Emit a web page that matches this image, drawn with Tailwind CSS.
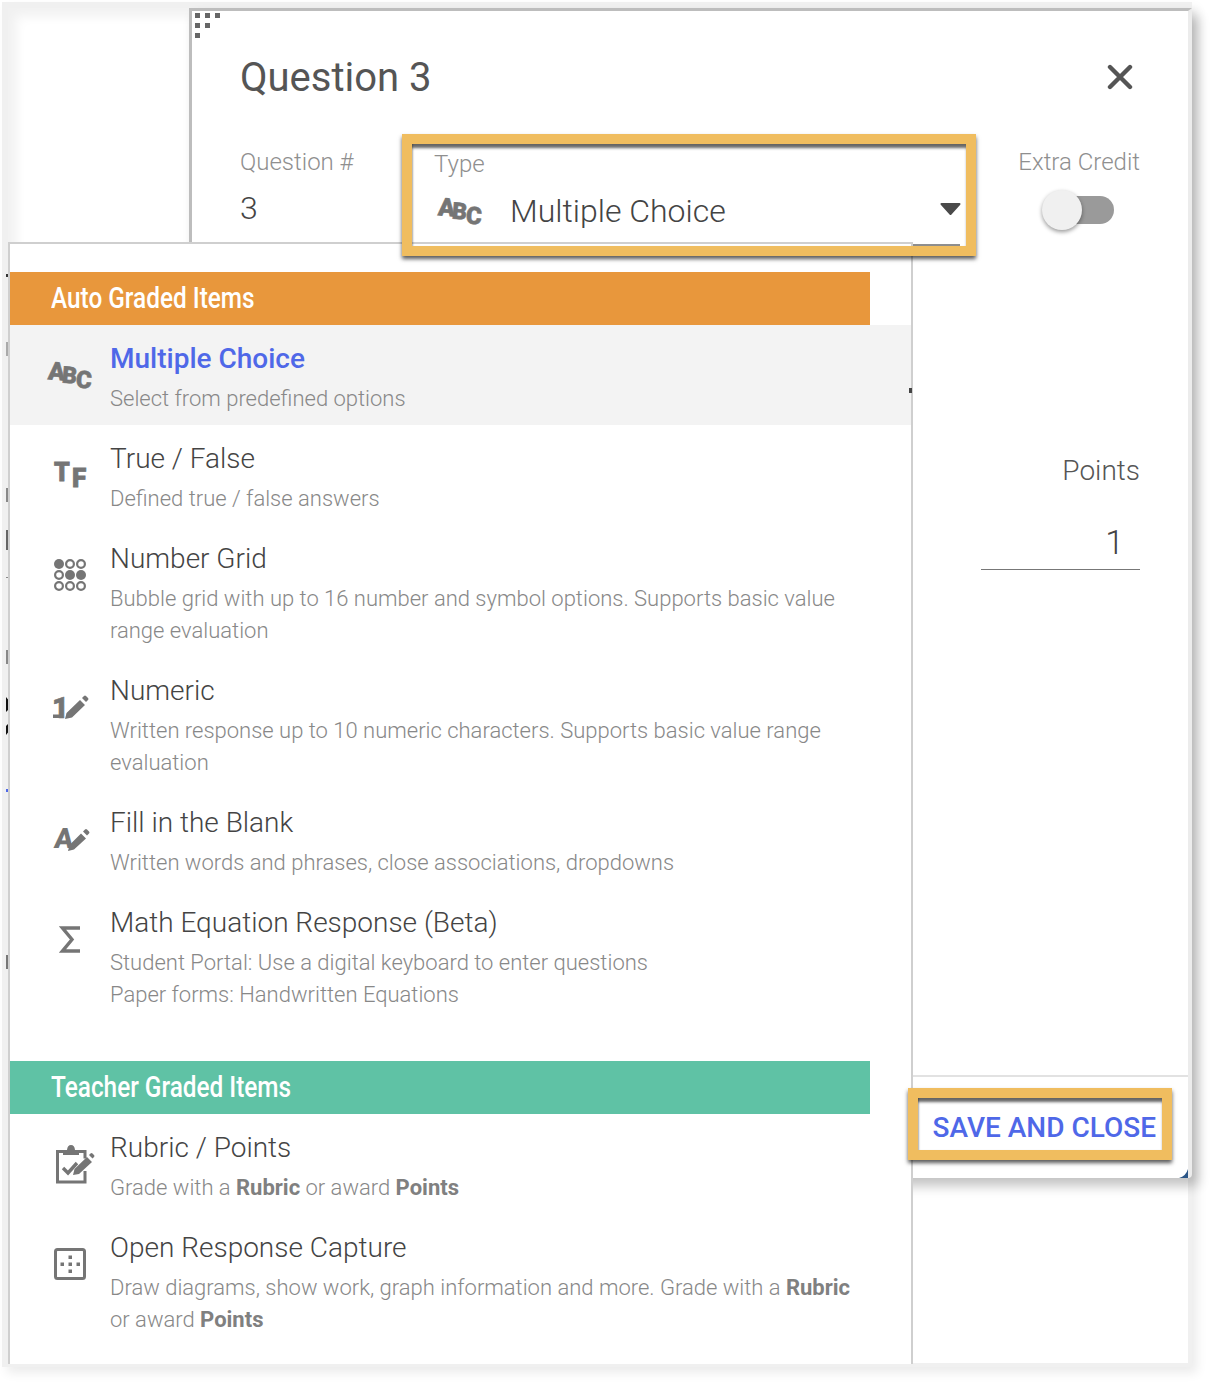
<!DOCTYPE html>
<html lang="en">
<head>
    <meta charset="UTF-8">
    <title>Question 3</title>
    <script src="https://cdn.jsdelivr.net/npm/@tailwindcss/browser@4"></script>
</head>
<body class="bg-white font-['Roboto',sans-serif]">
<div class="relative w-[1214px] h-[1390px] overflow-hidden bg-white">

    <!-- outer frame -->
    <div class="absolute left-[2px] top-[2px] w-[1190px] h-[1365px] border-[6px] border-r-[4px] border-b-[4px] border-[#f0f0f0] bg-white shadow-[5px_6px_10px_rgba(0,0,0,0.08)]"></div>
    <div class="absolute left-[8px] top-[8px] w-[181px] h-[234px] shadow-[inset_14px_14px_12px_-6px_rgba(0,0,0,0.06)]"></div>

    <!-- bits of the page behind -->
    <div class="absolute left-[6px] top-[274px] w-[4px] h-[3px] bg-[#333]"></div>
    <div class="absolute left-[6px] top-[342px] w-[3px] h-[14px] bg-[#aaa]"></div>
    <div class="absolute left-[6px] top-[488px] w-[3px] h-[14px] bg-[#888]"></div>
    <div class="absolute left-[6px] top-[530px] w-[3px] h-[20px] bg-[#666]"></div>
    <div class="absolute left-[6px] top-[577px] w-[3px] h-[1px] bg-[#888]"></div>
    <div class="absolute left-[6px] top-[650px] w-[3px] h-[14px] bg-[#888]"></div>
    <svg class="absolute left-[6px] top-[697px] w-[4px] h-[38px]" viewBox="0 0 4 38" fill="#111"><path d="M0 0l4 5v6L0 15zM0 38l4-5v-8l-4 4z"/></svg>
    <div class="absolute left-[6px] top-[789px] w-[3px] h-[3px] bg-[#4f68e8]"></div>
    <div class="absolute left-[6px] top-[955px] w-[3px] h-[14px] bg-[#777]"></div>

    <!-- modal -->
    <div class="absolute left-[189px] top-[8px] w-[1003px] h-[1170px] flex flex-col bg-white border-l-[3px] border-t-[3px] border-r-[4px] border-[#bdbdbd] border-r-[#ececec] rounded-br-[4px] shadow-[6px_8px_12px_rgba(0,0,0,0.24)]">
        <div class="absolute left-[3px] top-[2px] grid grid-cols-3 gap-[5px] w-[25px]">
            <i class="w-[5px] h-[5px] bg-[#666]"></i><i class="w-[5px] h-[5px] bg-[#666]"></i><i class="w-[5px] h-[5px] bg-[#666]"></i>
            <i class="w-[5px] h-[5px] bg-[#666]"></i><i class="w-[5px] h-[5px] bg-[#666]"></i><i class="w-[5px] h-[5px]"></i>
            <i class="w-[5px] h-[5px] bg-[#666]"></i>
        </div>

        <div class="mt-[42px] pl-[48px] pr-[55px] h-[50px] flex items-center justify-between">
            <h1 class="text-[40px] leading-[50px] text-[#555]">Question 3</h1>
            <svg class="w-[26px] h-[26px] mt-[-2px]" viewBox="0 0 26 26" fill="none" stroke="#555" stroke-width="4.4" stroke-linecap="round"><path d="M3 3 23 23M23 3 3 23"/></svg>
        </div>

        <div class="mt-[45px] pl-[48px] pr-[48px] flex">
            <div class="w-[194px]">
                <div class="text-[24px] leading-[28px] font-light text-[#8f8f8f]">Question #</div>
                <div class="mt-[12px] text-[32px] leading-[40px] font-light text-[#444]">3</div>
            </div>
            <div class="w-[526px] mt-[2px] relative h-[96px]">
                <div class="text-[24px] leading-[28px] font-light text-[#8f8f8f]">Type</div>
                <div class="mt-[13px] flex items-center h-[40px]">
                    <svg class="w-[50px] h-[32px] ml-[2px] shrink-0 overflow-visible" viewBox="0 0 50 32" fill="#757575" stroke="#757575" stroke-width="0.6" font-family="Roboto" font-weight="900">
                        <text x="2" y="21" font-size="25" transform="rotate(5 10 14)">A</text>
                        <text x="16" y="24" font-size="23" transform="rotate(5 22 18)">B</text>
                        <text x="30" y="29" font-size="24" transform="rotate(4 38 22)">C</text>
                    </svg>
                    <span class="ml-[24px] text-[32px] leading-[40px] font-light text-[#444]">Multiple Choice</span>
                    <svg class="ml-auto w-[21px] h-[12px] mr-[-1px] mt-[-4px]" viewBox="0 0 21 12" fill="#4a4a4a" stroke="#4a4a4a" stroke-width="2" stroke-linejoin="round"><path d="M1.500 1h18L10.500 11z"/></svg>
                </div>
                <div class="absolute left-[-20px] right-0 top-[94px] h-[2px] bg-[#8f8f8f]"></div>
            </div>
            <div class="flex-1 flex flex-col items-end">
                <div class="text-[24px] leading-[28px] font-light text-[#8f8f8f] whitespace-nowrap">Extra Credit</div>
                <div class="relative mt-[20px] mr-[26px] w-[52px] h-[28px] rounded-r-full bg-[#9a9a9a]">
                    <div class="absolute left-[-20px] top-[-6px] w-[40px] h-[40px] rounded-full bg-[#f0f0f0] shadow-[0_2px_4px_rgba(0,0,0,0.4)]"></div>
                </div>
            </div>
        </div>

        <div class="self-end mr-[48px] mt-[205px] w-[159px] flex flex-col items-end">
            <div class="text-[28px] leading-[40px] font-light text-[#555]">Points</div>
            <div class="mt-[31px] w-full h-[48px] pr-[16px] border-b border-[#777] text-right text-[34px] leading-[40px] font-light text-[#444]">1</div>
        </div>

        <div class="mt-auto h-[103px] border-t-2 border-[#e2e2e2] flex justify-end pr-[32px] pt-[31px] relative">
            <span class="text-[28px] leading-[40px] font-medium text-[#4f68e8] whitespace-nowrap">SAVE AND CLOSE</span>
            <svg class="absolute right-0 bottom-0 w-[9px] h-[9px]" viewBox="0 0 9 9" fill="#2c5687"><path d="M9 0v9H0q7-2 9-9z"/></svg>
        </div>
    </div>

    <!-- dropdown menu -->
    <div class="absolute left-[8px] top-[242px] w-[905px] h-[1122px] bg-white border-l-2 border-t-2 border-r-2 border-[#cfcfcf] pt-[28px]">
        <div class="w-[860px] h-[53px] bg-[#e8973c] pl-[41px] flex items-center text-white text-[29px] font-medium">
            <span class="inline-block origin-left scale-x-[0.84] whitespace-nowrap">Auto Graded Items</span>
        </div>

        <div class="flex bg-[#f3f3f3] pt-[14px] pb-[10px]">
            <div class="w-[100px] shrink-0 pt-[20px] pl-[36px]">
                <svg class="w-[50px] h-[32px] overflow-visible" viewBox="0 0 50 32" fill="#757575" stroke="#757575" stroke-width="0.6" font-family="Roboto" font-weight="900">
                    <text x="2" y="21" font-size="25" transform="rotate(5 10 14)">A</text>
                    <text x="16" y="24" font-size="23" transform="rotate(5 22 18)">B</text>
                    <text x="30" y="29" font-size="24" transform="rotate(4 38 22)">C</text>
                </svg>
            </div>
            <div>
                <div class="text-[28px] leading-[40px] font-medium text-[#4f68e8]">Multiple Choice</div>
                <div class="mt-[4px] text-[22px] leading-[32px] font-light text-[#888]">Select from predefined options</div>
            </div>
        </div>

        <div class="flex pt-[14px] pb-[10px]">
            <div class="w-[100px] shrink-0 pt-[21px] pl-[42px]">
                <svg class="w-[36px] h-[30px] overflow-visible" viewBox="0 0 36 30" fill="#757575" stroke="#757575" stroke-width="0.8" font-family="Roboto" font-weight="900">
                    <text x="2" y="21" font-size="25">T</text>
                    <text x="20" y="27" font-size="26">F</text>
                </svg>
            </div>
            <div>
                <div class="text-[28px] leading-[40px] font-light text-[#444]">True / False</div>
                <div class="mt-[4px] text-[22px] leading-[32px] font-light text-[#888]">Defined true / false answers</div>
            </div>
        </div>

        <div class="flex pt-[14px] pb-[10px]">
            <div class="w-[100px] shrink-0 pt-[20px] pl-[44px]">
                <svg class="w-[32px] h-[32px]" viewBox="0 0 32 32" fill="none" stroke="#757575" stroke-width="2.2">
                    <circle cx="5" cy="5" r="5" fill="#757575" stroke="none"/><circle cx="16" cy="5" r="3.900"/><circle cx="27" cy="5" r="3.900"/>
                    <circle cx="5" cy="16" r="3.900"/><circle cx="16" cy="16" r="5" fill="#757575" stroke="none"/><circle cx="27" cy="16" r="5" fill="#757575" stroke="none"/>
                    <circle cx="5" cy="27" r="3.900"/><circle cx="16" cy="27" r="3.900"/><circle cx="27" cy="27" r="3.900"/>
                </svg>
            </div>
            <div class="w-[745px]">
                <div class="text-[28px] leading-[40px] font-light text-[#444]">Number Grid</div>
                <div class="mt-[4px] text-[22px] leading-[32px] font-light text-[#888]">Bubble grid with up to 16 number and symbol options. Supports basic value range evaluation</div>
            </div>
        </div>

        <div class="flex pt-[14px] pb-[10px]">
            <div class="w-[100px] shrink-0 pt-[21px] pl-[41px]">
                <svg class="w-[38px] h-[30px] overflow-visible" viewBox="0 0 38 30" fill="#757575" font-family="Roboto" font-weight="900">
                    <text x="1" y="26" font-size="29" stroke="#757575" stroke-width="0.6">1</text>
                    <rect x="2" y="22.500" width="10" height="3.500"/>
                    <path d="M14 27l1.500-6L29 8l5 5L21 25.500zM31 6l2-2q1-1 2 0l2 2q1 1 0 2l-2 2z"/>
                </svg>
            </div>
            <div class="w-[745px]">
                <div class="text-[28px] leading-[40px] font-light text-[#444]">Numeric</div>
                <div class="mt-[4px] text-[22px] leading-[32px] font-light text-[#888]">Written response up to 10 numeric characters. Supports basic value range evaluation</div>
            </div>
        </div>

        <div class="flex pt-[14px] pb-[10px]">
            <div class="w-[100px] shrink-0 pt-[21px] pl-[41px]">
                <svg class="w-[38px] h-[30px] overflow-visible" viewBox="0 0 38 30" fill="#757575" font-family="Roboto" font-weight="900">
                    <text x="5" y="24" font-size="28" transform="skewX(-6)">A</text>
                    <path d="M17 27l1.500-6L30 9.500l5 5L23 25.500zM32 7.500l2-2q1-1 2 0l2 2q1 1 0 2l-2 2z"/>
                </svg>
            </div>
            <div>
                <div class="text-[28px] leading-[40px] font-light text-[#444]">Fill in the Blank</div>
                <div class="mt-[4px] text-[22px] leading-[32px] font-light text-[#888]">Written words and phrases, close associations, dropdowns</div>
            </div>
        </div>

        <div class="flex pt-[14px] pb-[10px]">
            <div class="w-[100px] shrink-0 pt-[22px] pl-[49px]">
                <svg class="w-[22px] h-[30px]" viewBox="0 0 22 30" fill="none" stroke="#757575" stroke-width="3.4"><path d="M21 3H3.500L13 14.500 3.500 26h17.500"/></svg>
            </div>
            <div>
                <div class="text-[28px] leading-[40px] font-light text-[#444]">Math Equation Response (Beta)</div>
                <div class="mt-[4px] text-[22px] leading-[32px] font-light text-[#888]">Student Portal: Use a digital keyboard to enter questions<br>Paper forms: Handwritten Equations</div>
            </div>
        </div>

        <div class="mt-[40px] w-[860px] h-[53px] bg-[#5fc2a5] pl-[41px] flex items-center text-white text-[29px] font-medium">
            <span class="inline-block origin-left scale-x-[0.84] whitespace-nowrap">Teacher Graded Items</span>
        </div>

        <div class="flex pt-[14px] pb-[10px]">
            <div class="w-[100px] shrink-0 pt-[16px] pl-[44px]">
                <svg class="w-[40px] h-[40px] overflow-visible" viewBox="0 0 40 40" fill="none" stroke="#757575" stroke-width="3">
                    <path d="M10 7.500H3.500V38H31V27M24 7.500h7v7"/>
                    <path d="M9 11V6h4q.5-5 4-5t4 5h4v5z" fill="#757575" stroke="none"/>
                    <path d="M9 24l5 5 9-10" stroke-width="3.400"/>
                    <path d="M19 31l1.500-6L33 13l5 5L25 30zM35 11l1.500-1.500q1-1 2 0l1.500 1.500q1 1 0 2L38.500 14.500z" fill="#757575" stroke="none"/>
                </svg>
            </div>
            <div>
                <div class="text-[28px] leading-[40px] font-light text-[#444]">Rubric / Points</div>
                <div class="mt-[4px] text-[22px] leading-[32px] font-light text-[#888]">Grade with a <b class="font-bold text-[#808080]">Rubric</b> or award <b class="font-bold text-[#808080]">Points</b></div>
            </div>
        </div>

        <div class="flex pt-[14px] pb-[10px]">
            <div class="w-[100px] shrink-0 pt-[20px] pl-[44px]">
                <svg class="w-[32px] h-[32px]" viewBox="0 0 32 32" fill="#757575">
                    <rect x="1.500" y="1.500" width="29" height="29" rx="2" fill="none" stroke="#757575" stroke-width="3"/>
                    <rect x="14.500" y="7.500" width="3.500" height="3.500"/><rect x="6.500" y="14.500" width="3.500" height="3.500"/><rect x="14.500" y="14.500" width="3.500" height="3.500"/><rect x="22.500" y="14.500" width="3.500" height="3.500"/><rect x="14.500" y="21.500" width="3.500" height="3.500"/>
                </svg>
            </div>
            <div class="w-[745px]">
                <div class="text-[28px] leading-[40px] font-light text-[#444]">Open Response Capture</div>
                <div class="mt-[4px] text-[22px] leading-[32px] font-light text-[#888]">Draw diagrams, show work, graph information and more. Grade with a <b class="font-bold text-[#808080]">Rubric</b> or award <b class="font-bold text-[#808080]">Points</b></div>
            </div>
        </div>

        <div class="absolute left-[899px] top-[144px] w-[3px] h-[5px] bg-[#444]"></div>
    </div>

    <!-- highlight boxes -->
    <div class="absolute left-[402px] top-[134px] w-[574px] h-[122px] border-[10px] border-[#f0bd5f] shadow-[0_3px_4px_rgba(0,0,0,0.65),inset_0_5px_3px_-1px_rgba(0,0,0,0.6),inset_2px_0_2px_-1px_rgba(0,0,0,0.25)]"></div>
    <div class="absolute left-[908px] top-[1088px] w-[264px] h-[72px] border-[10px] border-[#f0bd5f] shadow-[0_3px_4px_rgba(0,0,0,0.65),inset_0_5px_3px_-1px_rgba(0,0,0,0.6),inset_2px_0_2px_-1px_rgba(0,0,0,0.25)]"></div>
</div>
</body>
</html>
